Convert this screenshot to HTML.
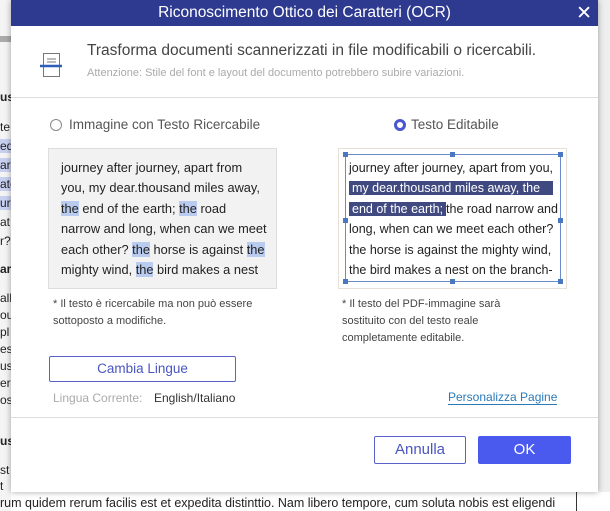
<!DOCTYPE html>
<html><head><style>
*{margin:0;padding:0;box-sizing:border-box}
body{width:610px;height:511px;overflow:hidden;background:#fff;position:relative;font-family:"Liberation Sans",sans-serif}
.bg{position:absolute;font-size:12px;color:#222;left:0}
.dlg{position:absolute;left:11px;top:0;width:587px;height:492px;background:#fff;box-shadow:0 0 6px rgba(0,0,0,.35)}
.title{height:26px;background:#2d3a8f;color:#fff;text-align:center;font-size:15.5px;line-height:26px}
.x{position:absolute;right:6px;top:2px;color:#fff;font-size:19px}
.a{position:absolute;white-space:nowrap}
.box{position:absolute;font-size:12.8px;color:#222;line-height:20.4px;white-space:nowrap}
.hl{background:#b9ccf0}
.sel{background:#414a80;color:#fff;padding:0 3px}
.h{position:absolute;width:5px;height:5px;background:#4a78c0}
</style></head><body>
<div class="bg" style="top:0;width:11px;height:511px;background:#f4f4f4"></div>
<div class="bg" style="top:36px;width:11px;height:6px;background:#aaa"></div>
<div class="bg" style="top:90px;font-weight:bold">us</div>
<div class="bg" style="top:118px;line-height:19px"><span>te</span><br><span style="background:#c8d0f0">ed</span><br><span style="background:#c8d0f0">ar</span><br><span style="background:#c8d0f0">ate</span><br><span style="background:#c8d0f0">ur</span><br>at<br>r?</div>
<div class="bg" style="top:262px;font-weight:bold">ar</div>
<div class="bg" style="top:290px;line-height:17px">all<br>ou<br>pl<br>es<br>us<br>er<br>os</div>
<div class="bg" style="top:434px;font-weight:bold">us</div>
<div class="bg" style="top:462px;line-height:16px">st<br>t</div>
<div class="bg" style="top:496px;font-size:12.5px;white-space:nowrap;left:0">rum quidem rerum facilis est et expedita distinttio. Nam libero tempore, cum soluta nobis est eligendi</div>
<div class="bg" style="left:598px;top:0;width:12px;height:492px;background:#eee"></div>
<div class="bg" style="left:576px;top:492px;width:1px;height:19px;background:#333"></div>
<div class="dlg">
<div class="title">Riconoscimento Ottico dei Caratteri (OCR)</div>
<div class="x">✕</div>
<svg class="a" style="left:28px;top:51px" width="24" height="28"><rect x="4.5" y="2.5" width="16" height="23" fill="#fff" stroke="#777"/><line x1="8" y1="8" x2="17" y2="8" stroke="#777"/><line x1="8" y1="11" x2="17" y2="11" stroke="#777"/><line x1="1" y1="15" x2="23" y2="15" stroke="#2d5fb8" stroke-width="2.5"/></svg>
<div class="a" style="left:76px;top:42px;font-size:15.5px;color:#444">Trasforma documenti scannerizzati in file modificabili o ricercabili.</div>
<div class="a" style="left:76px;top:67px;font-size:11px;color:#aaa">Attenzione: Stile del font e layout del documento potrebbero subire variazioni.</div>
<div class="a" style="left:0;top:97px;width:587px;height:1px;background:#ddd"></div>
<div class="a" style="left:39px;top:119px;width:12px;height:12px;border:1px solid #888;border-radius:50%"></div>
<div class="a" style="left:58px;top:117px;font-size:13.5px;color:#555">Immagine con Testo Ricercabile</div>
<div class="a" style="left:383px;top:119px;width:12px;height:12px;border:3px solid #4a55d0;border-radius:50%"></div>
<div class="a" style="left:400px;top:117px;font-size:13.5px;color:#555">Testo Editabile</div>
<div class="box" style="left:37px;top:148px;width:229px;height:141px;background:#f2f2f2;border:1px solid #ddd;padding:9px 0 0 12px">journey after journey, apart from<br>you, my dear.thousand miles away,<br><span class="hl">the</span> end of the earth; <span class="hl">the</span> road<br>narrow and long, when can we meet<br>each other? <span class="hl">the</span> horse is against <span class="hl">the</span><br>mighty wind, <span class="hl">the</span> bird makes a nest</div>
<div class="box" style="left:327px;top:148px;width:229px;height:141px;border:1px solid #e6e0d6;padding:9px 0 0 10px;font-size:12.5px;overflow:hidden">journey after journey, apart from you,<br><span class="sel">my dear.thousand miles away, the&nbsp;&nbsp;&nbsp;</span><br><span class="sel">end of the earth;</span>the road narrow and<br>long, when can we meet each other?<br>the horse is against the mighty wind,<br>the bird makes a nest on the branch-</div>
<div class="a" style="left:334px;top:154px;width:216px;height:128px;border:1px solid #6a8ac8"></div>
<div class="h" style="left:332px;top:152px"></div><div class="h" style="left:439px;top:152px"></div><div class="h" style="left:547px;top:152px"></div>
<div class="h" style="left:332px;top:218px"></div><div class="h" style="left:547px;top:218px"></div>
<div class="h" style="left:332px;top:279px"></div><div class="h" style="left:439px;top:279px"></div><div class="h" style="left:547px;top:279px"></div>
<div class="a" style="left:42px;top:296px;font-size:11px;color:#444;line-height:17px">* Il testo è ricercabile ma non può essere<br>sottoposto a modifiche.</div>
<div class="a" style="left:331px;top:296px;font-size:11px;color:#444;line-height:17px">* Il testo del PDF-immagine sarà<br>sostituito con del testo reale<br>completamente editabile.</div>
<div class="a" style="left:38px;top:356px;width:187px;height:26px;border:1px solid #5a62c8;border-radius:2px;color:#4a55c0;font-size:13.5px;text-align:center;line-height:24px">Cambia Lingue</div>
<div class="a" style="left:42px;top:391px;font-size:12px;color:#aaa">Lingua Corrente:</div>
<div class="a" style="left:143px;top:391px;font-size:12px;color:#333">English/Italiano</div>
<div class="a" style="left:437px;top:391px;font-size:12px;color:#2a7ab8;border-bottom:1px solid #2a7ab8;line-height:13px">Personalizza Pagine</div>
<div class="a" style="left:0;top:417px;width:587px;height:1px;background:#ddd"></div>
<div class="a" style="left:363px;top:436px;width:92px;height:28px;border:1px solid #5a62c8;border-radius:2px;color:#4a55c0;font-size:15px;text-align:center;line-height:26px">Annulla</div>
<div class="a" style="left:467px;top:436px;width:93px;height:28px;background:#4a5aef;border-radius:2px;color:#fff;font-size:15px;text-align:center;line-height:28px">OK</div>
</div>
</body></html>
